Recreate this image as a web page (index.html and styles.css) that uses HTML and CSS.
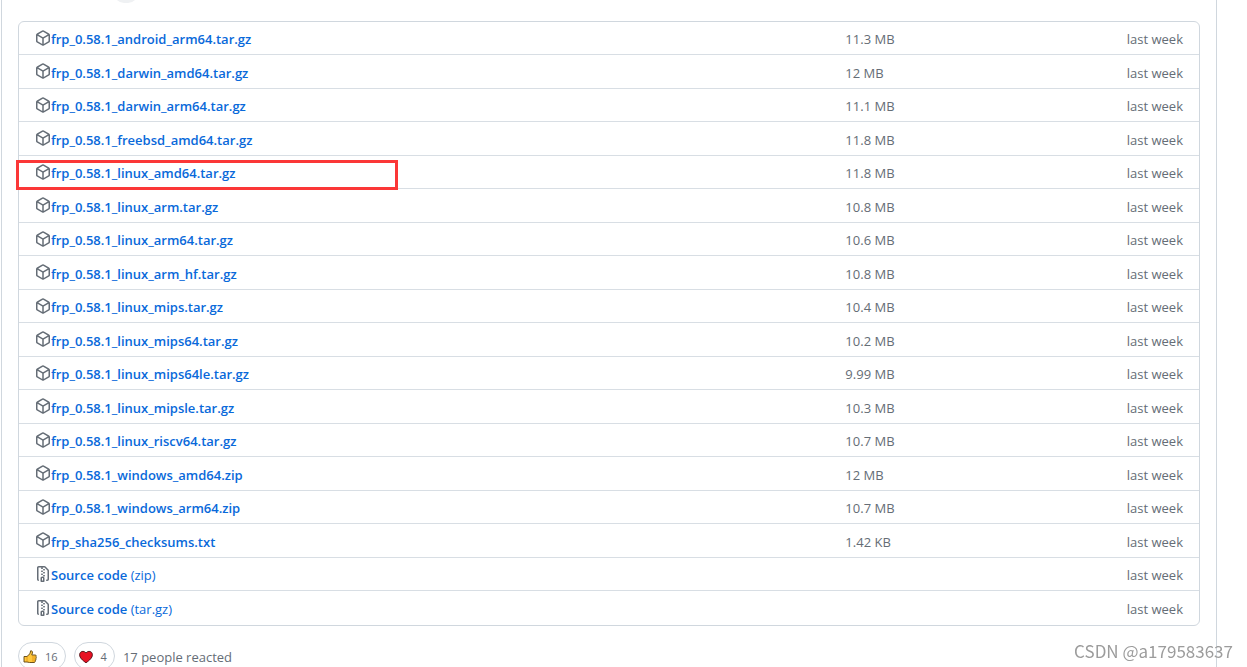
FILE: index.html
```html
<!DOCTYPE html>
<html lang="en">
<head>
<meta charset="utf-8">
<title>Release assets</title>
<link rel="stylesheet" href="styles.css">
</head>
<body>
<svg class="sprite" aria-hidden="true">
<symbol id="package" viewBox="0 0 16 16"><path d="m8.878.392 5.25 3.045c.54.314.872.89.872 1.514v6.098a1.75 1.75 0 0 1-.872 1.514l-5.25 3.045a1.75 1.75 0 0 1-1.756 0l-5.25-3.045A1.75 1.75 0 0 1 1 11.049V4.951c0-.624.332-1.201.872-1.514L7.122.392a1.75 1.75 0 0 1 1.756 0ZM7.875 1.69l-4.63 2.685L8 7.133l4.755-2.758-4.63-2.685a.248.248 0 0 0-.25 0ZM2.5 5.677v5.372c0 .09.047.171.125.216l4.625 2.683V8.432Zm6.25 8.271 4.625-2.683a.25.25 0 0 0 .125-.216V5.677L8.75 8.432Z"/></symbol>
<symbol id="zip" viewBox="0 0 16 16"><path d="M3.5 1.75v11.5c0 .09.048.173.126.217a.75.75 0 0 1-.752 1.298A1.748 1.748 0 0 1 2 13.25V1.75C2 .784 2.784 0 3.75 0h5.586c.464 0 .909.185 1.237.513l2.914 2.914c.329.328.513.773.513 1.237v8.586A1.75 1.75 0 0 1 12.25 15h-.5a.75.75 0 0 1 0-1.5h.5a.25.25 0 0 0 .25-.25V4.664a.25.25 0 0 0-.073-.177L9.513 1.573a.25.25 0 0 0-.177-.073H7.25a.75.75 0 0 1 0 1.5h-.5a.75.75 0 0 1 0-1.5h-3a.25.25 0 0 0-.25.25Zm3.75 8.75h.5c.966 0 1.75.784 1.75 1.75v3a.75.75 0 0 1-.75.75h-2.5a.75.75 0 0 1-.75-.75v-3c0-.966.784-1.75 1.75-1.75ZM6 5.25a.75.75 0 0 1 .75-.75h.5a.75.75 0 0 1 0 1.5h-.5A.75.75 0 0 1 6 5.25Zm.75 2.25h.5a.75.75 0 0 1 0 1.5h-.5a.75.75 0 0 1 0-1.5ZM8 6.75A.75.75 0 0 1 8.75 6h.5a.75.75 0 0 1 0 1.5h-.5A.75.75 0 0 1 8 6.75ZM8.75 3h.5a.75.75 0 0 1 0 1.5h-.5a.75.75 0 0 1 0-1.5ZM8 9.75A.75.75 0 0 1 8.75 9h.5a.75.75 0 0 1 0 1.5h-.5A.75.75 0 0 1 8 9.75Zm-1 2.5v2.25h1v-2.25a.25.25 0 0 0-.25-.25h-.5a.25.25 0 0 0-.25.25Z"/></symbol>
</svg>
<main class="release">
<div class="heading"><span class="counter"></span></div>
<ul class="assets">
<li class="asset"><span class="name"><svg class="icon"><use href="#package"/></svg><a href="#">frp_0.58.1_android_arm64.tar.gz</a></span><span class="size">11.3 MB</span><span class="date">last week</span></li>
<li class="asset"><span class="name"><svg class="icon"><use href="#package"/></svg><a href="#">frp_0.58.1_darwin_amd64.tar.gz</a></span><span class="size">12 MB</span><span class="date">last week</span></li>
<li class="asset"><span class="name"><svg class="icon"><use href="#package"/></svg><a href="#">frp_0.58.1_darwin_arm64.tar.gz</a></span><span class="size">11.1 MB</span><span class="date">last week</span></li>
<li class="asset"><span class="name"><svg class="icon"><use href="#package"/></svg><a href="#">frp_0.58.1_freebsd_amd64.tar.gz</a></span><span class="size">11.8 MB</span><span class="date">last week</span></li>
<li class="asset"><span class="name"><svg class="icon"><use href="#package"/></svg><a href="#">frp_0.58.1_linux_amd64.tar.gz</a></span><span class="size">11.8 MB</span><span class="date">last week</span><span class="marker"></span></li>
<li class="asset"><span class="name"><svg class="icon"><use href="#package"/></svg><a href="#">frp_0.58.1_linux_arm.tar.gz</a></span><span class="size">10.8 MB</span><span class="date">last week</span></li>
<li class="asset"><span class="name"><svg class="icon"><use href="#package"/></svg><a href="#">frp_0.58.1_linux_arm64.tar.gz</a></span><span class="size">10.6 MB</span><span class="date">last week</span></li>
<li class="asset"><span class="name"><svg class="icon"><use href="#package"/></svg><a href="#">frp_0.58.1_linux_arm_hf.tar.gz</a></span><span class="size">10.8 MB</span><span class="date">last week</span></li>
<li class="asset"><span class="name"><svg class="icon"><use href="#package"/></svg><a href="#">frp_0.58.1_linux_mips.tar.gz</a></span><span class="size">10.4 MB</span><span class="date">last week</span></li>
<li class="asset"><span class="name"><svg class="icon"><use href="#package"/></svg><a href="#">frp_0.58.1_linux_mips64.tar.gz</a></span><span class="size">10.2 MB</span><span class="date">last week</span></li>
<li class="asset"><span class="name"><svg class="icon"><use href="#package"/></svg><a href="#">frp_0.58.1_linux_mips64le.tar.gz</a></span><span class="size">9.99 MB</span><span class="date">last week</span></li>
<li class="asset"><span class="name"><svg class="icon"><use href="#package"/></svg><a href="#">frp_0.58.1_linux_mipsle.tar.gz</a></span><span class="size">10.3 MB</span><span class="date">last week</span></li>
<li class="asset"><span class="name"><svg class="icon"><use href="#package"/></svg><a href="#">frp_0.58.1_linux_riscv64.tar.gz</a></span><span class="size">10.7 MB</span><span class="date">last week</span></li>
<li class="asset"><span class="name"><svg class="icon"><use href="#package"/></svg><a href="#">frp_0.58.1_windows_amd64.zip</a></span><span class="size">12 MB</span><span class="date">last week</span></li>
<li class="asset"><span class="name"><svg class="icon"><use href="#package"/></svg><a href="#">frp_0.58.1_windows_arm64.zip</a></span><span class="size">10.7 MB</span><span class="date">last week</span></li>
<li class="asset"><span class="name"><svg class="icon"><use href="#package"/></svg><a href="#">frp_sha256_checksums.txt</a></span><span class="size">1.42 KB</span><span class="date">last week</span></li>
<li class="asset"><span class="name"><svg class="icon"><use href="#zip"/></svg><a href="#">Source code <span class="format">(zip)</span></a></span><span class="size"></span><span class="date">last week</span></li>
<li class="asset"><span class="name"><svg class="icon"><use href="#zip"/></svg><a href="#">Source code <span class="format">(tar.gz)</span></a></span><span class="size"></span><span class="date">last week</span></li>
</ul>
<div class="reactions">
<button class="reaction" type="button" aria-label="16 thumbs up"><svg class="emoji" viewBox="0 0 14 14"><path d="M1 6.5h3L7 3.600 7.600.8c1.400-.2 2.200.8 1.800 2.200L8.800 5h3.400c1.200 0 1.400 1.500.5 1.900.9.5.8 1.800-.2 2 .7.6.5 1.600-.4 1.800.4.8-.1 1.800-1.100 1.800H6.500L4 12H1z" fill="#ffc83d" stroke="#5b4210" stroke-width=".9"/><path d="M9 7h3.500M9 9h3.200M9 10.900h2.800M4 6.500V12" fill="none" stroke="#d67d00" stroke-width=".6"/></svg>16</button>
<button class="reaction" type="button" aria-label="4 hearts"><svg class="emoji" viewBox="0 0 14 14"><path d="M7 12.800C3.500 10.300.6 7.800.6 4.700.6 1.200 4.900.2 7 3c2.100-2.800 6.400-1.800 6.400 1.700 0 3.100-2.900 5.600-6.400 8.100Z" fill="#e81224" stroke="#4a0b10" stroke-width=".9"/></svg>4</button>
<span class="reacted">17 people reacted</span>
</div>
</main>
<div class="watermark">CSDN @a179583637</div>
</body>
</html>
```
FILE: styles.css
```css
* { box-sizing: border-box; }

body {
  margin: 0;
  height: 100vh;
  overflow: hidden;
  background: #fff;
  color: #656d76;
  font: 13px/20px "Open Sans", "Noto Sans", sans-serif;
}

.sprite { position: absolute; width: 0; height: 0; }

.release {
  min-height: 100vh;
  margin: 0 30px 0 1px;
  padding: 0 16px;
  border: solid #d0d7de;
  border-width: 0 1px;
}

.heading { display: flex; height: 21px; padding-left: 96px; }

.counter {
  width: 24px;
  height: 20px;
  margin-top: -17px;
  border-radius: 10px;
  background: #eff1f3;
}

.assets {
  margin: 0;
  padding: 0;
  list-style: none;
  border: 1px solid #d0d7de;
  border-radius: 6px;
}

.asset {
  position: relative;
  display: grid;
  grid-template-columns: minmax(0, 12fr) minmax(0, 2fr) minmax(0, 3fr);
  align-items: center;
  height: 33px;
  padding: 2px 16px 0;
  border-bottom: 1px solid #d8dee4;
}

.asset:nth-child(even) { height: 34px; }
.asset:last-child { border-bottom: 0; }

.name { display: flex; align-items: center; }
.name a { color: #0969da; font-weight: 600; text-decoration: none; white-space: nowrap; }
.format { font-weight: 400; }
.icon { flex: none; width: 16px; height: 16px; margin-bottom: 3px; fill: #656d76; }
.date { text-align: right; }

.marker {
  position: absolute;
  top: 4px;
  left: -3px;
  width: 382px;
  height: 30px;
  border: 3px solid #fb3737;
}

.reactions { display: flex; align-items: center; gap: 8px; margin-top: 16px; }

.reaction {
  display: flex;
  align-items: center;
  gap: 8px;
  height: 28px;
  padding: 2px 7px 0 4px;
  border: 1px solid #d0d7de;
  border-radius: 14px;
  background: #fff;
  color: #656d76;
  font: 11px/20px "Open Sans", "Noto Sans", sans-serif;
}

.emoji { width: 14px; height: 14px; }
.reacted { padding-top: 2px; }

.watermark {
  position: fixed;
  right: 14px;
  bottom: 4px;
  color: #9c9c9c;
  font: 17px/24px "Noto Sans CJK SC", sans-serif;
}
```
